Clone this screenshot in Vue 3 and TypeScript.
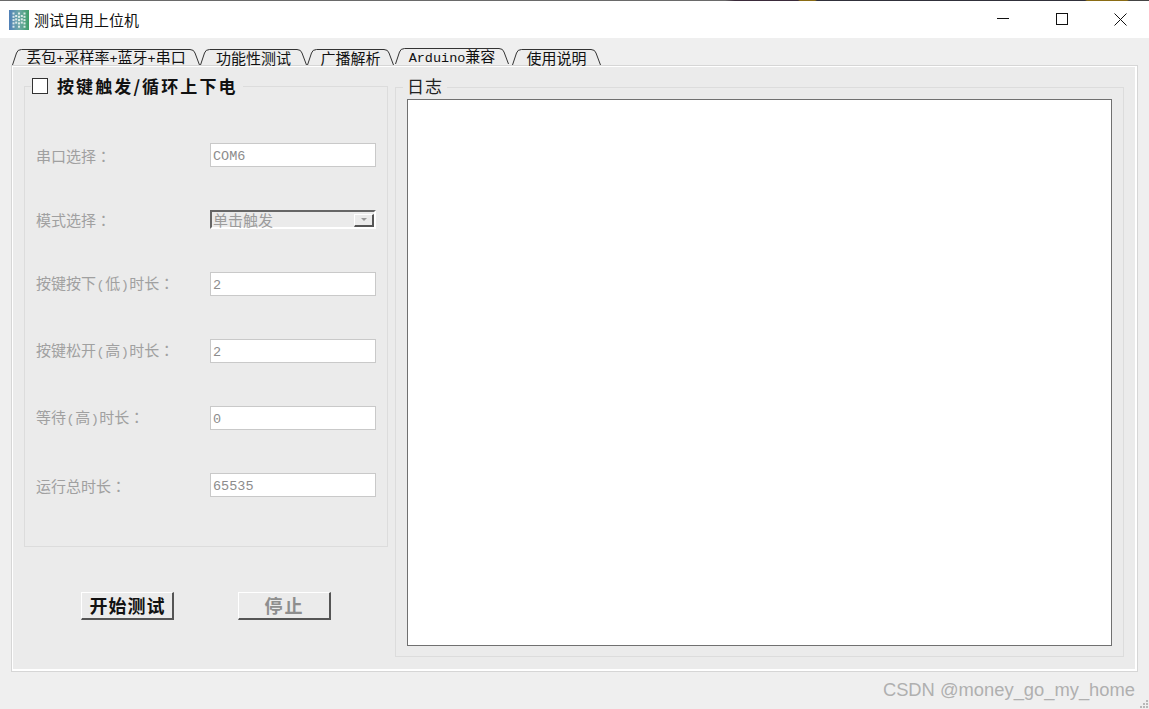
<script setup lang="ts">
interface Seg { t: string; cls: string }
const segs = (s: string): Seg[] =>
  (s.match(/[\x20-\x7e]+|：|[^\x20-\x7e：]+/g) ?? []).map((t) => ({
    t,
    cls: t === '：' ? 'c' : /^[\x20-\x7e]/.test(t) ? 'm' : '',
  }))

const tabs = [
  { label: '丢包+采样率+蓝牙+串口', width: 188, gap: 0, active: false },
  { label: '功能性测试', width: 107, gap: 0, active: false },
  { label: '广播解析', width: 87, gap: 0, active: false },
  { label: 'Arduino兼容', width: 114, gap: 1, active: true },
  { label: '使用说明', width: 89, gap: 3, active: false },
]
const tabPath = (w: number) =>
  `M0.5 17 L4.5 5 Q5.5 1.5 9.5 1.5 L${w - 10} 1.5 Q${w - 6} 1.5 ${w - 5} 5 L${w - 0.5} 17`

const fields = [
  { label: '串口选择：', value: 'COM6', combo: false },
  { label: '模式选择：', value: '单击触发', combo: true },
  { label: '按键按下(低)时长：', value: '2', combo: false },
  { label: '按键松开(高)时长：', value: '2', combo: false },
  { label: '等待(高)时长：', value: '0', combo: false },
  { label: '运行总时长：', value: '65535', combo: false },
]
const dots: [number, number][] = []
for (let j = 0; j < 5; j++) {
  dots.push([3.5, 2.5 + j * 3.3], [14.5, 2.5 + j * 3.3])
  dots.push([9, 2.5 + j * 3.3])
  if (j < 3) {
    dots.push([6.2, 5 + j * 3.3], [11.8, 5 + j * 3.3])
  }
}
</script>

<template>
  <div class="window">
    <div class="edge"></div>
    <header class="titlebar">
      <svg class="logo" width="20" height="20" viewBox="0 0 20 20">
        <defs>
          <linearGradient id="lg" x1="0" y1="0" x2="1" y2="0">
            <stop offset="0" stop-color="#4f7fb8" />
            <stop offset="0.5" stop-color="#6fa8a8" />
            <stop offset="1" stop-color="#3f9f68" />
          </linearGradient>
        </defs>
        <rect width="20" height="20" fill="url(#lg)" />
        <rect v-for="(d, i) in dots" :key="i" :x="d[0]" :y="d[1]" width="2" height="2" fill="#f0f6f4" opacity="0.85" />
      </svg>
      <span class="title">测试自用上位机</span>
      <div class="controls">
        <svg width="12" height="12" viewBox="0 0 12 12"><path d="M0 5.5H12" stroke="#111" fill="none" /></svg>
        <svg width="12" height="12" viewBox="0 0 12 12"><rect x="0.5" y="0.5" width="11" height="11" stroke="#111" fill="none" /></svg>
        <svg width="13" height="13" viewBox="0 0 13 13"><path d="M0.5 0.5L12.5 12.5M12.5 0.5L0.5 12.5" stroke="#111" fill="none" /></svg>
      </div>
    </header>

    <nav class="tabs">
      <div
        v-for="t in tabs"
        :key="t.label"
        class="tab"
        :class="{ active: t.active }"
        :style="{ width: t.width + 'px', marginLeft: t.gap + 'px' }"
      >
        <svg class="tab-shape" :width="t.width" height="17">
          <path :d="tabPath(t.width)" fill="#ededed" stroke="#333" />
        </svg>
        <span class="tab-label">
          <template v-for="(s, i) in segs(t.label)" :key="i"><span :class="s.cls">{{ s.t }}</span></template>
        </span>
      </div>
    </nav>

    <main class="pane">
      <div class="left">
        <section class="group settings">
          <div class="legend check-legend">
            <span class="checkbox"></span>
            <span class="check-text">按键触发/循环上下电</span>
          </div>
          <div v-for="f in fields" :key="f.label" class="row">
            <label class="label">
              <template v-for="(s, i) in segs(f.label)" :key="i"><span :class="s.cls">{{ s.t }}</span></template>
            </label>
            <div v-if="f.combo" class="combo">
              <span class="combo-text">{{ f.value }}</span>
              <span class="combo-btn"><i class="arrow"></i></span>
            </div>
            <div v-else class="input">{{ f.value }}</div>
          </div>
        </section>
        <div class="actions">
          <button class="btn start" type="button">开始测试</button>
          <button class="btn stop" type="button" disabled>停止</button>
        </div>
      </div>

      <section class="group log">
        <div class="legend log-legend">日志</div>
        <div class="log-box"></div>
      </section>
    </main>

    <footer class="status">
      <span class="mark">CSDN @money_go_my_home</span>
      <svg class="grip" width="9" height="9" viewBox="0 0 9 9">
        <g fill="#b8b8b8">
          <rect x="6" y="0" width="2" height="2" />
          <rect x="3" y="3" width="2" height="2" />
          <rect x="6" y="3" width="2" height="2" />
          <rect x="0" y="6" width="2" height="2" />
          <rect x="3" y="6" width="2" height="2" />
          <rect x="6" y="6" width="2" height="2" />
        </g>
      </svg>
    </footer>
  </div>
</template>

<style>
html, body { margin: 0; background: #f0f0f0; overflow: hidden; }
</style>

<style scoped>
.window {
  width: 1149px;
  height: 709px;
  display: flex;
  flex-direction: column;
  background: #efefef;
  overflow: hidden;
  font-family: "Noto Sans CJK SC", "Liberation Sans", sans-serif;
  color: #111;
}
.edge {
  height: 1px;
  flex: none;
  background: linear-gradient(90deg, #6a6a6a 0, #6a6a6a 725px, #3a2a3a 735px, #3a2a3a 798px, #8a6c14 800px, #8a6c14 815px, #30303a 817px, #30303a 1085px, #8a6c14 1087px, #8a6c14 1127px, #444 1129px);
}
.titlebar {
  height: 37px;
  flex: none;
  background: #fff;
  display: flex;
  align-items: center;
  padding-left: 9px;
}
.logo { flex: none; }
.title { margin-left: 5px; font-size: 15px; line-height: 20px; }
.controls {
  margin-left: auto;
  width: 130px;
  padding-right: 22px;
  margin-bottom: 1px;
  display: flex;
  justify-content: space-between;
  align-items: center;
}
.tabs {
  flex: none;
  display: flex;
  height: 17px;
  margin-top: 10px;
  margin-bottom: -1px;
  padding-left: 12px;
  position: relative;
  z-index: 3;
}
.tab {
  position: relative;
  height: 17px;
  flex: none;
  display: flex;
  justify-content: center;
  align-items: center;
}
.tab.active { top: -1px; height: 18px; }
.tab-shape { position: absolute; left: 0; top: 0; display: block; }
.tab-label {
  position: relative;
  top: 1px;
  font-size: 15px;
  line-height: 17px;
  white-space: nowrap;
  color: #111;
}
.m { font-family: "Liberation Mono", monospace; font-size: 13.5px; }
.c { font-family: "Noto Sans CJK TC", sans-serif; }
.pane {
  flex: none;
  margin-left: 11px;
  margin-top: 1px;
  width: 1127px;
  height: 607px;
  box-sizing: border-box;
  border: 1px solid #d6d6d6;
  background: #ebebeb;
  box-shadow: inset 1px 1px #fff, inset -2px -2px #fff;
  padding: 20px 13px 14px 12px;
  display: flex;
  gap: 7px;
  position: relative;
  z-index: 2;
}
.left { width: 364px; flex: none; display: flex; flex-direction: column; }
.group {
  position: relative;
  box-sizing: border-box;
  border: 1px solid #dcdcdc;
}
.settings {
  height: 461px;
  padding: 56px 11px 0;
  display: flex;
  flex-direction: column;
  gap: 43px;
}
.legend {
  position: absolute;
  background: #ebebeb;
  display: flex;
  align-items: center;
}
.check-legend { left: 6px; top: -10px; height: 18px; width: 212px; padding-left: 1px; box-sizing: border-box; }
.checkbox {
  width: 16px;
  height: 16px;
  box-sizing: border-box;
  border: 1px solid #333;
  background: #fff;
  flex: none;
}
.check-text {
  margin-left: 9px;
  font-size: 17px;
  font-weight: 700;
  letter-spacing: 2.1px;
  line-height: 18px;
  white-space: nowrap;
}
.row { display: flex; align-items: center; }
.label {
  width: 174px;
  flex: none;
  font-size: 15px;
  line-height: 19px;
  color: #a0a0a0;
  white-space: nowrap;
}
.label .m { padding: 0 0.5px; }
.input {
  width: 166px;
  height: 24px;
  box-sizing: border-box;
  border: 1px solid #c9c9c9;
  background: #fff;
  padding-left: 2px;
  font-family: "Liberation Mono", monospace;
  font-size: 13.5px;
  line-height: 25px;
  color: #8c8c8c;
}
.combo {
  width: 166px;
  height: 19px;
  box-sizing: border-box;
  border-top: 2px solid #666;
  border-left: 2px solid #666;
  border-right: 2px solid #fff;
  border-bottom: 2px solid #fff;
  background: #ebebeb;
  display: flex;
  align-items: center;
  padding-left: 1px;
}
.combo-text { font-size: 15px; line-height: 15px; color: #9c9c9c; }
.combo-btn {
  margin-left: auto;
  width: 20px;
  height: 13px;
  box-sizing: border-box;
  border-top: 1px solid #fff;
  border-left: 1px solid #fff;
  border-right: 2px solid #555;
  border-bottom: 2px solid #555;
  margin-top: 1px;
  display: flex;
  align-items: center;
  justify-content: center;
}
.arrow {
  width: 0;
  height: 0;
  border-left: 3px solid transparent;
  border-right: 3px solid transparent;
  border-top: 3px solid #999;
}
.actions { margin-top: 45px; padding-left: 57px; display: flex; gap: 64px; }
.btn {
  width: 93px;
  height: 28px;
  padding: 0 0 2px 1px;
  box-sizing: border-box;
  background: #ebebeb;
  border-top: 1px solid #fff;
  border-left: 1px solid #fff;
  border-right: 2px solid #555;
  border-bottom: 2px solid #555;
  font-family: inherit;
  font-size: 18px;
  font-weight: 700;
  letter-spacing: 1px;
  line-height: 24px;
  color: #111;
}
.btn.stop { color: #8e8e8e; letter-spacing: 2px; }
.log { flex: 1; margin-top: 1px; padding: 11px 11px 10px; display: flex; }
.log-legend {
  left: 7px;
  top: -12px;
  height: 19px;
  padding: 0 4px;
  font-size: 17px;
  letter-spacing: 1px;
  color: #222;
}
.log-box {
  flex: 1;
  background: #fff;
  border: 1px solid #707070;
}
.status {
  flex: 1;
  position: relative;
  display: flex;
  align-items: center;
  justify-content: flex-end;
  padding-right: 14px;
  padding-bottom: 2px;
}
.mark {
  font-family: "Liberation Sans", sans-serif;
  font-size: 18.35px;
  line-height: 22px;
  color: #b0b0b0;
}
.grip { position: absolute; right: 0; bottom: 0; }
</style>
